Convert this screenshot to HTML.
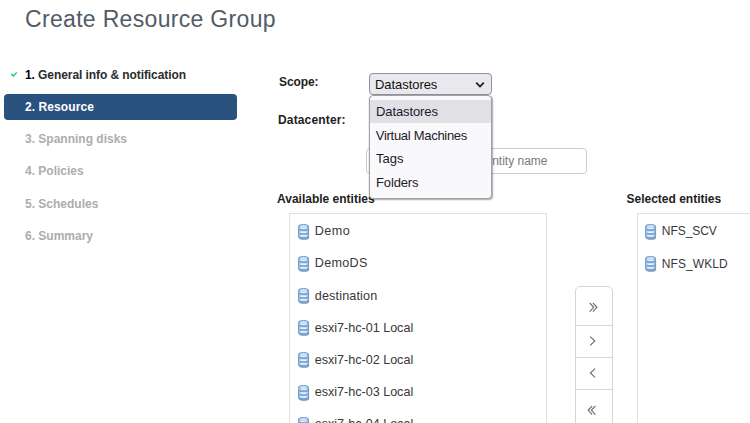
<!DOCTYPE html>
<html><head><meta charset="utf-8">
<style>
html,body{margin:0;padding:0;background:#fff;}
body{width:750px;height:423px;overflow:hidden;position:relative;font-family:"Liberation Sans",Arial,sans-serif;color:#1a1a1a;}
.abs{position:absolute;white-space:nowrap;}
#title{left:25px;top:4.8px;font-size:23px;line-height:28px;color:#515c67;letter-spacing:0.32px;font-weight:400;}
.nav{left:25px;font-size:12px;font-weight:bold;line-height:14px;color:#adadad;}
.lbl{font-size:12px;font-weight:bold;line-height:14px;color:#222;}
.item{font-size:12.6px;line-height:14px;color:#383838;}
.opt{font-size:13px;line-height:15px;color:#1c1c28;left:376px;}
.sep{left:576px;width:35.8px;height:1px;background:#d6d6d6;}
</style></head><body>
<svg width="0" height="0" style="position:absolute"><defs>
<linearGradient id="bg" x1="0" x2="1" y1="0" y2="0"><stop offset="0" stop-color="#9dbfe3"/><stop offset=".3" stop-color="#e6f6fb"/><stop offset=".7" stop-color="#e6f6fb"/><stop offset="1" stop-color="#9dbfe3"/></linearGradient>
<g id="ds">
<path d="M1.1,3.2 L1.1,13.9 A5,1.8 0 0 0 11.1,13.9 L11.1,3.2 Z" fill="#444" opacity=".5"/>
<path d="M0.5,2.2 L0.5,13.2 A5,1.8 0 0 0 10.5,13.2 L10.5,2.2 A5,1.8 0 0 0 0.5,2.2 Z" fill="#82a8d8" stroke="#6a92ca" stroke-width=".8"/>
<ellipse cx="5.5" cy="2.2" rx="3.7" ry="0.95" fill="#d6e9f8"/>
<path d="M0.9,2.9 Q5.5,3.9 10.1,2.9 L10.1,4.6 Q5.5,5.6 0.9,4.6 Z" fill="url(#bg)"/>
<path d="M0.9,6.7 Q5.5,7.7 10.1,6.7 L10.1,8.4 Q5.5,9.4 0.9,8.4 Z" fill="url(#bg)"/>
<path d="M0.9,10.5 Q5.5,11.5 10.1,10.5 L10.1,12.2 Q5.5,13.2 0.9,12.2 Z" fill="url(#bg)"/>
</g>
</defs></svg>
<div id="title" class="abs">Create Resource Group</div>

<svg class="abs" style="left:10px;top:70px" width="8" height="8" viewBox="0 0 8 8"><path d="M1.3,3.9 L3.4,6 L6.7,2.5" fill="none" stroke="#2fcb70" stroke-width="1.5"/></svg>
<div class="abs nav" style="top:68px;color:#2b2b2b;letter-spacing:-.08px"><span style="color:#000">1.</span> General info &amp; notification</div>
<div class="abs" style="left:4px;top:94px;width:233px;height:26px;background:#29527f;border-radius:4px;"></div>
<div class="abs nav" style="top:100px;color:#fff;letter-spacing:.08px">2. Resource</div>
<div class="abs nav" style="top:131.5px;">3. Spanning disks</div>
<div class="abs nav" style="top:164px;">4. Policies</div>
<div class="abs nav" style="top:197px;">5. Schedules</div>
<div class="abs nav" style="top:228.5px;">6. Summary</div>

<div class="abs lbl" style="left:279px;top:74.7px;letter-spacing:-.1px">Scope:</div>
<div class="abs lbl" style="left:278px;top:113.2px;letter-spacing:.15px">Datacenter:</div>
<div class="abs lbl" style="left:277px;top:192px;">Available entities</div>
<div class="abs lbl" style="left:626.5px;top:192px;">Selected entities</div>

<!-- search input -->
<div class="abs" style="left:365.8px;top:147.8px;width:219.4px;height:24px;border:1px solid #cdcdcd;border-radius:4px;box-sizing:content-box"></div>
<div class="abs item" style="right:202.5px;top:154.1px;color:#737b83;font-size:12px">Enter available entity name</div>

<!-- available list -->
<div class="abs" style="left:289px;top:213px;width:256.3px;height:230px;border:1px solid #e0e0e0;"></div>
<!-- selected list -->
<div class="abs" style="left:636.5px;top:213px;width:130px;height:230px;border:1px solid #e0e0e0;"></div>

<!-- move buttons -->
<div class="abs" style="left:575px;top:286.2px;width:35.8px;height:160px;border:1px solid #d6d6d6;border-radius:5px;"></div>
<div class="abs sep" style="top:324.6px"></div>
<div class="abs sep" style="top:356.6px"></div>
<div class="abs sep" style="top:388.8px"></div>
<svg class="abs" style="left:586px;top:300px" width="16" height="16" viewBox="0 0 16 16" fill="none" stroke="#6c6c6c" stroke-width="1.15"><path d="M3.7,2.9 L7.7,7.3 L3.7,11.7 M6.9,2.9 L10.9,7.3 L6.9,11.7"/></svg>
<svg class="abs" style="left:586px;top:333px" width="16" height="16" viewBox="0 0 16 16" fill="none" stroke="#6a6a6a" stroke-width="1.1"><path d="M4.2,3.6 L8.8,8 L4.2,12.4"/></svg>
<svg class="abs" style="left:586px;top:365.2px" width="16" height="16" viewBox="0 0 16 16" fill="none" stroke="#6a6a6a" stroke-width="1.1"><path d="M9,3.6 L4.4,8 L9,12.4"/></svg>
<svg class="abs" style="left:584px;top:402px" width="16" height="16" viewBox="0 0 16 16" fill="none" stroke="#6c6c6c" stroke-width="1.15"><path d="M8.2,3.9 L4.2,8.3 L8.2,12.7 M11.4,3.9 L7.4,8.3 L11.4,12.7"/></svg>

<!-- select -->
<div class="abs" style="left:369px;top:73.2px;width:121.4px;height:20px;border:1px solid #8f8f9d;border-radius:4px;background:#e9e9ed;"></div>
<div class="abs item" style="left:375px;top:77.3px;font-size:13px;line-height:15px;color:#111;letter-spacing:-.06px">Datastores</div>
<svg class="abs" style="left:473.6px;top:79.5px" width="12" height="10" viewBox="0 0 12 10" fill="none" stroke="#1a1a1a" stroke-width="1.7"><path d="M2.2,2.6 L6,6.6 L9.8,2.6"/></svg>

<!-- dropdown -->
<div class="abs" style="left:369px;top:95.4px;width:121.4px;height:101.3px;border:1px solid #a2a2a8;border-radius:4px;background:#f9f9fb;box-shadow:0.5px 1px 1.5px rgba(0,0,0,.35);"></div>
<div class="abs" style="left:370px;top:100px;width:121.4px;height:23px;background:#e0e0e6;"></div>
<div class="abs opt" style="top:104px;letter-spacing:-.1px">Datastores</div>
<div class="abs opt" style="top:127.9px;left:375.8px;letter-spacing:-.29px">Virtual Machines</div>
<div class="abs opt" style="top:150.8px;left:376.1px">Tags</div>
<div class="abs opt" style="top:174.9px;letter-spacing:-.14px">Folders</div>
<svg class="abs" style="left:297.5px;top:223.5px" width="13" height="17" viewBox="0 0 13 17"><use href="#ds"/></svg><div class="abs item" style="left:314.8px;top:224.15px;letter-spacing:0.45px">Demo</div>
<svg class="abs" style="left:297.5px;top:255.7px" width="13" height="17" viewBox="0 0 13 17"><use href="#ds"/></svg><div class="abs item" style="left:314.8px;top:256.35px;letter-spacing:0.3px">DemoDS</div>
<svg class="abs" style="left:297.5px;top:287.9px" width="13" height="17" viewBox="0 0 13 17"><use href="#ds"/></svg><div class="abs item" style="left:314.8px;top:288.55px;letter-spacing:0.15px">destination</div>
<svg class="abs" style="left:297.5px;top:320.1px" width="13" height="17" viewBox="0 0 13 17"><use href="#ds"/></svg><div class="abs item" style="left:314.8px;top:320.75px;letter-spacing:-0.02px">esxi7-hc-01 Local</div>
<svg class="abs" style="left:297.5px;top:352.3px" width="13" height="17" viewBox="0 0 13 17"><use href="#ds"/></svg><div class="abs item" style="left:314.8px;top:352.95px;letter-spacing:-0.02px">esxi7-hc-02 Local</div>
<svg class="abs" style="left:297.5px;top:384.5px" width="13" height="17" viewBox="0 0 13 17"><use href="#ds"/></svg><div class="abs item" style="left:314.8px;top:385.15px;letter-spacing:-0.02px">esxi7-hc-03 Local</div>
<svg class="abs" style="left:297.5px;top:416.70000000000005px" width="13" height="17" viewBox="0 0 13 17"><use href="#ds"/></svg><div class="abs item" style="left:314.8px;top:417.35px;letter-spacing:-0.02px">esxi7-hc-04 Local</div>
<svg class="abs" style="left:644.8px;top:223.5px" width="13" height="17" viewBox="0 0 13 17"><use href="#ds"/></svg><div class="abs item" style="left:661.8px;top:224.4px;font-size:12px;letter-spacing:-0.05px">NFS_SCV</div>
<svg class="abs" style="left:644.8px;top:255.7px" width="13" height="17" viewBox="0 0 13 17"><use href="#ds"/></svg><div class="abs item" style="left:661.8px;top:256.59999999999997px;font-size:12px;letter-spacing:0.08px">NFS_WKLD</div>
</body></html>
